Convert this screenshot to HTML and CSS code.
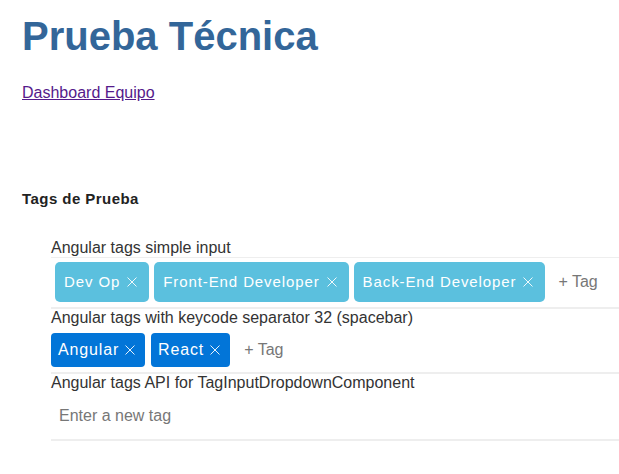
FILE: index.html
```html
<!DOCTYPE html>
<html lang="es">
<head>
<meta charset="utf-8">
<title>Prueba Técnica</title>
<link rel="stylesheet" href="styles.css">
</head>
<body>
<div class="page">
  <h1 class="title">Prueba Técnica</h1>
  <a class="nav-link" href="#dashboard">Dashboard Equipo</a>

  <section class="tags-section">
    <h2 class="section-title">Tags de Prueba</h2>
    <div class="demos">
      <div class="label">Angular tags simple input</div>
      <div class="tag-input tag-input--info">
        <span class="tag tag--info"><span class="tag-text">Dev Op</span><svg class="tag-x" viewBox="0 0 10 10"><path d="M0.5 0.5L9.5 9.5M9.5 0.5L0.5 9.5"/></svg></span>
        <span class="tag tag--info"><span class="tag-text">Front-End Developer</span><svg class="tag-x" viewBox="0 0 10 10"><path d="M0.5 0.5L9.5 9.5M9.5 0.5L0.5 9.5"/></svg></span>
        <span class="tag tag--info"><span class="tag-text">Back-End Developer</span><svg class="tag-x" viewBox="0 0 10 10"><path d="M0.5 0.5L9.5 9.5M9.5 0.5L0.5 9.5"/></svg></span>
        <input class="tag-field" type="text" placeholder="+ Tag">
      </div>

      <div class="label">Angular tags with keycode separator 32 (spacebar)</div>
      <div class="tag-input tag-input--primary">
        <span class="tag tag--primary"><span class="tag-text">Angular</span><svg class="tag-x" viewBox="0 0 10 10"><path d="M0.5 0.5L9.5 9.5M9.5 0.5L0.5 9.5"/></svg></span>
        <span class="tag tag--primary"><span class="tag-text">React</span><svg class="tag-x" viewBox="0 0 10 10"><path d="M0.5 0.5L9.5 9.5M9.5 0.5L0.5 9.5"/></svg></span>
        <input class="tag-field" type="text" placeholder="+ Tag">
      </div>

      <div class="label">Angular tags API for TagInputDropdownComponent</div>
      <div class="tag-input tag-input--plain">
        <input class="tag-field tag-field--wide" type="text" placeholder="Enter a new tag">
      </div>
    </div>
  </section>
</div>
</body>
</html>
```
FILE: styles.css
```css
html, body {
  margin: 0;
  padding: 0;
  background: #ffffff;
  overflow: hidden;
}

body {
  font-family: "Liberation Sans", Arial, sans-serif;
  color: #333333;
}

.page {
  padding: 13px 0 0 22px;
}

.title {
  margin: 0 0 25px 0;
  font-size: 40px;
  line-height: 46px;
  font-weight: bold;
  color: #336699;
}

.nav-link {
  display: inline-block;
  font-size: 16px;
  line-height: 18px;
  color: #551a8b;
  text-decoration: underline;
}

.tags-section {
  margin-top: 88px;
}

.section-title {
  margin: 0;
  font-size: 15px;
  line-height: 17px;
  font-weight: bold;
  color: #222222;
  letter-spacing: 0.45px;
}

.demos {
  margin: 32px 0 0 29px;
  display: flex;
  flex-direction: column;
}

.label {
  font-size: 16px;
  line-height: 18px;
  color: #333333;
}

.tag-input {
  display: flex;
  flex-wrap: nowrap;
  align-items: center;
  border-bottom: 2px solid #eeeeee;
}

.tag-input--info {
  border-top: 1px solid #eeeeee;
  padding: 4px 0 5px 4px;
  gap: 5px;
}

.tag-input--primary {
  padding: 6px 0 5px 0;
  gap: 6px;
}

.tag-input--plain {
  height: 47px;
}

.tag {
  display: inline-flex;
  align-items: center;
  flex: none;
  color: #ffffff;
  border-radius: 4px;
  white-space: nowrap;
}

.tag--info {
  height: 40px;
  padding: 0 12px 0 9px;
  gap: 7px;
  background: #5bc0de;
  font-size: 15px;
  letter-spacing: 0.9px;
  border-radius: 5px;
}

.tag--primary {
  height: 34px;
  padding: 0 10px 0 7px;
  gap: 6px;
  background: #0275d8;
  font-size: 16px;
  letter-spacing: 0.85px;
}

.tag-text {
  line-height: 18px;
}

.tag-x {
  width: 10px;
  height: 10px;
  flex: none;
  fill: none;
  stroke: #ffffff;
  stroke-width: 1;
  opacity: 0.9;
}

.tag-field {
  flex: 1 1 auto;
  min-width: 0;
  width: 40px;
  border: none;
  outline: none;
  background: transparent;
  padding: 0 0 0 8px;
  margin: 0;
  font-family: "Liberation Sans", Arial, sans-serif;
  font-size: 16px;
  line-height: 18px;
  color: #333333;
}

.tag-field::placeholder {
  color: #777777;
  opacity: 1;
}

.tag-field--wide {
  height: 100%;
}
```
